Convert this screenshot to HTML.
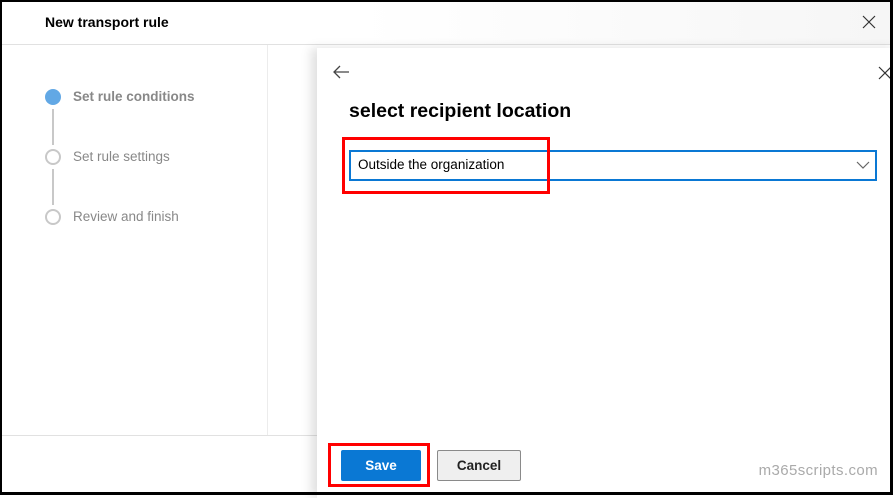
<!DOCTYPE html>
<html><head><style>
*{margin:0;padding:0;box-sizing:border-box}
body{width:893px;height:495px;overflow:hidden;background:#fff;font-family:"Liberation Sans",sans-serif;position:relative}
.frame{position:absolute;left:0;top:0;width:893px;height:495px;border:2px solid #000;border-right-width:3px;border-bottom-width:3px;z-index:20;pointer-events:none}
.abs{position:absolute}
</style></head><body>
<div class="abs" style="left:0;top:0;width:893px;height:44px;background:linear-gradient(90deg,#fff 40%,#f6f6f6)"></div>
<div class="abs" style="left:0;top:44px;width:893px;height:1px;background:#e1e1e1"></div>
<div class="abs" style="left:45px;top:14px;font-size:14px;font-weight:bold;color:#000">New transport rule</div>
<svg class="abs" style="left:862px;top:15px" width="14" height="14"><path d="M1 1L13 13M13 1L1 13" stroke="#333" stroke-width="1.2"/></svg>
<div class="abs" style="left:267px;top:45px;width:1px;height:390px;background:#ececec"></div>
<div class="abs" style="left:0;top:435px;width:320px;height:1px;background:#e1e1e1"></div>
<div class="abs" style="left:45px;top:89px;width:16px;height:16px;border-radius:50%;background:#62a8e5"></div>
<div class="abs" style="left:52px;top:109px;width:2px;height:36px;background:#c8c8c8"></div>
<div class="abs" style="left:45px;top:149px;width:16px;height:16px;border-radius:50%;border:2px solid #c8c8c8"></div>
<div class="abs" style="left:52px;top:169px;width:2px;height:36px;background:#c8c8c8"></div>
<div class="abs" style="left:45px;top:209px;width:16px;height:16px;border-radius:50%;border:2px solid #c8c8c8"></div>
<div class="abs" style="left:73px;top:89px;font-size:13.5px;font-weight:bold;color:#888">Set rule conditions</div>
<div class="abs" style="left:73px;top:149px;font-size:13.5px;color:#888">Set rule settings</div>
<div class="abs" style="left:73px;top:209px;font-size:13.5px;color:#888">Review and finish</div>
<div class="abs" style="left:317px;top:48px;width:580px;height:450px;background:#fff;box-shadow:-6px 0 10px rgba(0,0,0,.12)"></div>
<svg class="abs" style="left:332px;top:64px" width="18" height="16"><path d="M17 8H2M8 2L2 8L8 14" stroke="#444" stroke-width="1.3" fill="none"/></svg>
<svg class="abs" style="left:878px;top:66px" width="14" height="14"><path d="M1 1L13 13M13 1L1 13" stroke="#333" stroke-width="1.2"/></svg>
<div class="abs" style="left:349px;top:100px;font-size:19.5px;font-weight:bold;color:#000">select recipient location</div>
<div class="abs" style="left:349px;top:150px;width:528px;height:31px;border:2px solid #0a78d4"></div>
<div class="abs" style="left:358px;top:157px;font-size:13.5px;color:#000">Outside the organization</div>
<svg class="abs" style="left:856px;top:160px" width="14" height="10"><path d="M1 2L7 8L13 2" stroke="#666" stroke-width="1.2" fill="none"/></svg>
<div class="abs" style="left:342px;top:137px;width:208px;height:57px;border:3px solid #f00"></div>
<div class="abs" style="left:341px;top:450px;width:80px;height:31px;background:#0a78d4;border-radius:2px;color:#fff;font-weight:bold;font-size:13.5px;text-align:center;line-height:31px">Save</div>
<div class="abs" style="left:328px;top:443px;width:102px;height:44px;border:3px solid #f00"></div>
<div class="abs" style="left:437px;top:450px;width:84px;height:31px;background:#efefef;border:1px solid #8a8a8a;border-radius:2px;color:#222;font-weight:bold;font-size:13.5px;text-align:center;line-height:29px">Cancel</div>
<div class="abs" style="left:710px;top:462px;width:168px;text-align:right;font-size:15px;color:#aaa;letter-spacing:.4px">m365scripts.com</div>
<div class="frame"></div>
</body></html>
